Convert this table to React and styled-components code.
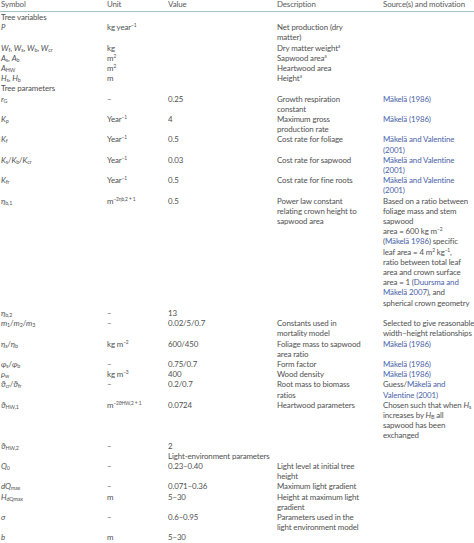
import React from "react";
import styled, { createGlobalStyle } from "styled-components";

const GlobalStyle = createGlobalStyle`
  html, body {
    margin: 0;
    padding: 0;
    background: #fff;
  }
  body {
    font-family: Lato, "Open Sans", "Liberation Sans", sans-serif;
    color: #505050;
    overflow: hidden;
  }
`;

const COLS = "106px 61px 109px 106px 1fr";

const Page = styled.div`
  width: 474px;
  height: 543px;
  overflow: hidden;
  font-size: 7.9px;
  letter-spacing: -0.12px;
  line-height: 10.2px;
`;

const Header = styled.div`
  display: grid;
  grid-template-columns: ${COLS};
  height: 11px;
  padding-left: 1px;
  align-items: start;
  border-bottom: 1.5px solid #a9c3c2;
  color: #595959;
  line-height: 9px;
`;

const Row = styled.div`
  display: grid;
  grid-template-columns: ${COLS};
  padding-left: 1px;
`;

const Cell = styled.div`
  white-space: nowrap;
`;

const Section = styled.div`
  grid-column: ${(p) => p.$col || 1} / -1;
  white-space: nowrap;
`;

const Link = styled.span`
  color: #4a62a8;
`;

const I = styled.i`
  font-style: italic;
`;

const Sub = styled.sub`
  font-size: 0.68em;
  line-height: 0;
  vertical-align: -0.25em;
`;

const Sup = styled.sup`
  font-size: 0.62em;
  line-height: 0;
  vertical-align: 0.55em;
`;

const Lines = ({ lines }) =>
  lines ? lines.map((l, i) => <div key={i}>{l}</div>) : null;

const mk = <Link>Mäkelä (1986)</Link>;
const mv = [<Link>Mäkelä and Valentine</Link>, <Link>(2001)</Link>];
const yr = (
  <>
    Year<Sup>−1</Sup>
  </>
);

const rows = [
  { section: "Tree variables" },
  {
    sym: <I>P</I>,
    unit: (
      <>
        kg year<Sup>−1</Sup>
      </>
    ),
    desc: ["Net production (dry", "matter)"],
  },
  {
    sym: (
      <>
        <I>W</I>
        <Sub>f</Sub>, <I>W</I>
        <Sub>s</Sub>, <I>W</I>
        <Sub>b</Sub>, <I>W</I>
        <Sub>cr</Sub>
      </>
    ),
    unit: "kg",
    desc: [
      <>
        Dry matter weight<Sup>a</Sup>
      </>,
    ],
  },
  {
    sym: (
      <>
        <I>A</I>
        <Sub>s</Sub>, <I>A</I>
        <Sub>b</Sub>
      </>
    ),
    unit: (
      <>
        m<Sup>2</Sup>
      </>
    ),
    desc: [
      <>
        Sapwood area<Sup>a</Sup>
      </>,
    ],
  },
  {
    sym: (
      <>
        <I>A</I>
        <Sub>HW</Sub>
      </>
    ),
    unit: (
      <>
        m<Sup>2</Sup>
      </>
    ),
    desc: ["Heartwood area"],
  },
  {
    sym: (
      <>
        <I>H</I>
        <Sub>s</Sub>, <I>H</I>
        <Sub>b</Sub>
      </>
    ),
    unit: "m",
    desc: [
      <>
        Height<Sup>a</Sup>
      </>,
    ],
  },
  { section: "Tree parameters" },
  {
    sym: (
      <>
        <I>r</I>
        <Sub>G</Sub>
      </>
    ),
    unit: "–",
    value: "0.25",
    desc: ["Growth respiration", "constant"],
    src: [mk],
  },
  {
    sym: (
      <>
        <I>K</I>
        <Sub>p</Sub>
      </>
    ),
    unit: yr,
    value: "4",
    desc: ["Maximum gross", "production rate"],
    src: [mk],
  },
  {
    sym: (
      <>
        <I>K</I>
        <Sub>f</Sub>
      </>
    ),
    unit: yr,
    value: "0.5",
    desc: ["Cost rate for foliage"],
    src: mv,
  },
  {
    sym: (
      <>
        <I>K</I>
        <Sub>s</Sub>/<I>K</I>
        <Sub>b</Sub>/<I>K</I>
        <Sub>cr</Sub>
      </>
    ),
    unit: yr,
    value: "0.03",
    desc: ["Cost rate for sapwood"],
    src: mv,
  },
  {
    sym: (
      <>
        <I>K</I>
        <Sub>fr</Sub>
      </>
    ),
    unit: yr,
    value: "0.5",
    desc: ["Cost rate for fine roots"],
    src: mv,
  },
  {
    sym: (
      <>
        <I>η</I>
        <Sub>b,1</Sub>
      </>
    ),
    unit: (
      <>
        m<Sup>−2ηb,2 + 1</Sup>
      </>
    ),
    value: "0.5",
    desc: ["Power law constant", "relating crown height to", "sapwood area"],
    src: [
      "Based on a ratio between",
      "foliage mass and stem",
      "sapwood",
      <>
        area = 600 kg m<Sup>−2</Sup>
      </>,
      <>
        (<Link>Mäkelä 1986</Link>) specific
      </>,
      <>
        leaf area = 4 m<Sup>2</Sup> kg<Sup>−1</Sup>,
      </>,
      "ratio between total leaf",
      "area and crown surface",
      <>
        area = 1 (<Link>Duursma and</Link>
      </>,
      <>
        <Link>Mäkelä 2007</Link>), and
      </>,
      "spherical crown geometry",
    ],
  },
  {
    sym: (
      <>
        <I>η</I>
        <Sub>b,2</Sub>
      </>
    ),
    unit: "–",
    value: "13",
  },
  {
    sym: (
      <>
        <I>m</I>
        <Sub>1</Sub>/<I>m</I>
        <Sub>2</Sub>/<I>m</I>
        <Sub>3</Sub>
      </>
    ),
    unit: "–",
    value: "0.02/5/0.7",
    desc: ["Constants used in", "mortality model"],
    src: ["Selected to give reasonable", "width–height relationships"],
  },
  {
    sym: (
      <>
        <I>η</I>
        <Sub>s</Sub>/<I>η</I>
        <Sub>b</Sub>
      </>
    ),
    unit: (
      <>
        kg m<Sup>−2</Sup>
      </>
    ),
    value: "600/450",
    desc: ["Foliage mass to sapwood", "area ratio"],
    src: [mk],
  },
  {
    sym: (
      <>
        <I>φ</I>
        <Sub>s</Sub>/<I>φ</I>
        <Sub>b</Sub>
      </>
    ),
    unit: "–",
    value: "0.75/0.7",
    desc: ["Form factor"],
    src: [mk],
  },
  {
    sym: (
      <>
        <I>ρ</I>
        <Sub>w</Sub>
      </>
    ),
    unit: (
      <>
        kg m<Sup>−3</Sup>
      </>
    ),
    value: "400",
    desc: ["Wood density"],
    src: [mk],
  },
  {
    sym: (
      <>
        <I>ϑ</I>
        <Sub>cr</Sub>/<I>ϑ</I>
        <Sub>fr</Sub>
      </>
    ),
    unit: "–",
    value: "0.2/0.7",
    desc: ["Root mass to biomass", "ratios"],
    src: [
      <>
        Guess/<Link>Mäkelä and</Link>
      </>,
      <Link>Valentine (2001)</Link>,
    ],
  },
  {
    sym: (
      <>
        <I>ϑ</I>
        <Sub>HW,1</Sub>
      </>
    ),
    unit: (
      <>
        m<Sup>−2ϑHW,2 + 1</Sup>
      </>
    ),
    value: "0.0724",
    desc: ["Heartwood parameters"],
    src: [
      <>
        Chosen such that when <I>H</I>
        <Sub>s</Sub>
      </>,
      <>
        increases by <I>H</I>
        <Sub>B</Sub> all
      </>,
      "sapwood has been",
      "exchanged",
    ],
  },
  {
    sym: (
      <>
        <I>ϑ</I>
        <Sub>HW,2</Sub>
      </>
    ),
    unit: "–",
    value: "2",
  },
  { section: "Light-environment parameters", col: 3 },
  {
    sym: (
      <>
        <I>Q</I>
        <Sub>0</Sub>
      </>
    ),
    unit: "–",
    value: "0.23–0.40",
    desc: ["Light level at initial tree", "height"],
  },
  {
    sym: (
      <>
        <I>dQ</I>
        <Sub>max</Sub>
      </>
    ),
    unit: "–",
    value: "0.071–0.36",
    desc: ["Maximum light gradient"],
  },
  {
    sym: (
      <>
        <I>H</I>
        <Sub>dQmax</Sub>
      </>
    ),
    unit: "m",
    value: "5–30",
    desc: ["Height at maximum light", "gradient"],
  },
  {
    sym: <I>σ</I>,
    unit: "–",
    value: "0.6–0.95",
    desc: ["Parameters used in the", "light environment model"],
  },
  {
    sym: <I>b</I>,
    unit: "m",
    value: "5–30",
  },
];

export default function App() {
  return (
    <Page>
      <GlobalStyle />
      <Header>
        <Cell>Symbol</Cell>
        <Cell>Unit</Cell>
        <Cell>Value</Cell>
        <Cell>Description</Cell>
        <Cell>Source(s) and motivation</Cell>
      </Header>
      {rows.map((r, i) =>
        r.section ? (
          <Row key={i}>
            <Section $col={r.col}>{r.section}</Section>
          </Row>
        ) : (
          <Row key={i}>
            <Cell>{r.sym}</Cell>
            <Cell>{r.unit}</Cell>
            <Cell>{r.value}</Cell>
            <Cell>
              <Lines lines={r.desc} />
            </Cell>
            <Cell>
              <Lines lines={r.src} />
            </Cell>
          </Row>
        )
      )}
    </Page>
  );
}
